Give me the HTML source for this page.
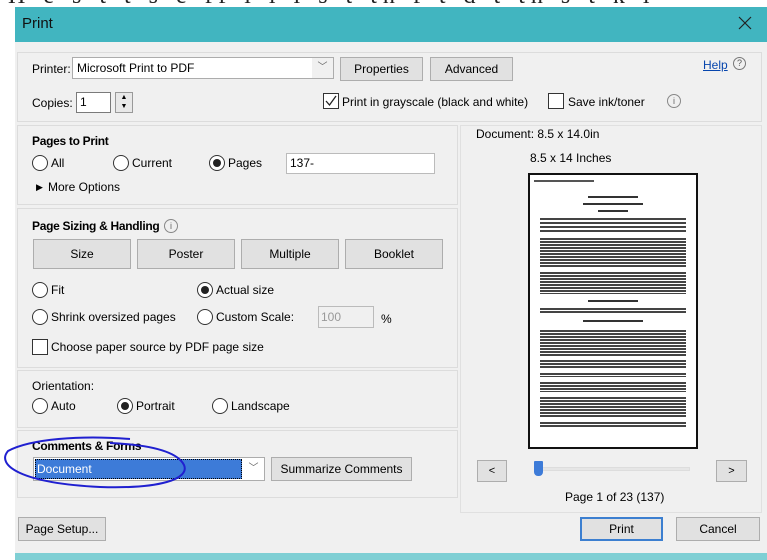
<!DOCTYPE html>
<html><head><meta charset="utf-8"><style>
*{box-sizing:border-box}
body{margin:0;width:767px;height:560px;overflow:hidden;background:#fff;font-family:"Liberation Sans",sans-serif;font-size:12px;color:#000;position:relative}
.a{position:absolute}
.t{position:absolute;white-space:nowrap;font-size:12px;line-height:14px}
.b{position:absolute;background:#e1e1e1;border:1px solid #adadad;text-align:center;font-size:12px;display:flex;align-items:center;justify-content:center}
.r{position:absolute;width:16px;height:16px;border:1px solid #333;border-radius:50%;background:#fff}
.r.on::after{content:"";position:absolute;left:3px;top:3px;width:8px;height:8px;border-radius:50%;background:#222}
.c{position:absolute;width:16px;height:16px;border:1px solid #333;background:#fff}
.sec{position:absolute;border:1px solid #dcdcdc;background:#f0f0f0}
.in{position:absolute;background:#fff;border:1px solid #7a7a7a}
.bd{font-weight:bold;letter-spacing:-0.3px}
</style></head><body>
<div class="a" style="left:0;top:0;width:767px;height:7px;background:#fff;overflow:hidden"><div class="t" style="top:-16px;left:8px;font-family:'Liberation Serif',serif;font-size:24px;line-height:24px;color:#222;letter-spacing:6px">H  e   s  t    t   s   e    ff  l   l i    s t  th   f  t  d  t  th     s t   k    l</div></div>
<div class="a" style="left:15px;top:7px;width:752px;height:553px;background:#f0f0f0"></div>
<div class="a" style="left:15px;top:7px;width:752px;height:35px;background:#41b5c0"></div>
<div class="t" style="left:22px;top:15px;font-size:15px;line-height:18px;color:#111">Print</div>
<svg class="a" style="left:738px;top:16px" width="14" height="14"><path d="M1 1L13 13M13 1L1 13" stroke="#222" stroke-width="1.2"/></svg>
<div class="a" style="left:15px;top:553px;width:752px;height:7px;background:#7fcfd4"></div>

<div class="sec" style="left:17px;top:52px;width:745px;height:70px"></div>
<div class="t" style="left:32px;top:62px">Printer:</div>
<div class="in" style="left:72px;top:57px;width:262px;height:22px;border-color:#acacac"></div>
<div class="t" style="left:77px;top:61px">Microsoft Print to PDF</div>
<div class="a" style="left:312px;top:58px;width:21px;height:20px;background:#f0f0f0;color:#666;text-align:center;font-size:10px;line-height:20px">﹀</div>
<div class="b" style="left:340px;top:57px;width:83px;height:24px">Properties</div>
<div class="b" style="left:430px;top:57px;width:83px;height:24px">Advanced</div>
<div class="t" style="left:703px;top:58px;color:#0645ad;text-decoration:underline">Help</div>
<div class="a" style="left:733px;top:57px;width:13px;height:13px;border:1px solid #777;border-radius:50%;font-size:9px;line-height:11px;text-align:center;color:#555">?</div>
<div class="t" style="left:32px;top:96px">Copies:</div>
<div class="in" style="left:76px;top:92px;width:35px;height:21px"></div>
<div class="t" style="left:80px;top:95px">1</div>
<div class="a" style="left:115px;top:92px;width:18px;height:21px;border:1px solid #999;background:#e8e8e8;font-size:7px;line-height:9px;text-align:center">▲<br>▼</div>
<div class="c" style="left:323px;top:93px"></div>
<svg class="a" style="left:325px;top:95px" width="12" height="12"><path d="M1 6L4.5 10L11 1" fill="none" stroke="#222" stroke-width="1.3"/></svg>
<div class="t" style="left:342px;top:95px">Print in grayscale (black and white)</div>
<div class="c" style="left:548px;top:93px"></div>
<div class="t" style="left:568px;top:95px">Save ink/toner</div>
<div class="a" style="left:667px;top:94px;width:14px;height:14px;border:1px solid #888;border-radius:50%;font-size:9px;line-height:12px;text-align:center;color:#666">i</div>

<div class="sec" style="left:17px;top:125px;width:441px;height:80px"></div>
<div class="t bd" style="left:32px;top:134px">Pages to Print</div>
<div class="r" style="left:32px;top:155px"></div><div class="t" style="left:51px;top:156px">All</div>
<div class="r" style="left:113px;top:155px"></div><div class="t" style="left:132px;top:156px">Current</div>
<div class="r on" style="left:209px;top:155px"></div><div class="t" style="left:228px;top:156px">Pages</div>
<div class="in" style="left:286px;top:153px;width:149px;height:21px;border-color:#bbb"></div>
<div class="t" style="left:290px;top:156px">137-</div>
<div class="t" style="left:36px;top:180px;font-size:9px">▶</div>
<div class="t" style="left:48px;top:180px">More Options</div>

<div class="sec" style="left:17px;top:208px;width:441px;height:160px"></div>
<div class="t bd" style="left:32px;top:219px">Page Sizing &amp; Handling</div>
<div class="a" style="left:164px;top:219px;width:14px;height:14px;border:1px solid #888;border-radius:50%;font-size:9px;line-height:12px;text-align:center;color:#666">i</div>
<div class="b" style="left:33px;top:239px;width:98px;height:30px">Size</div>
<div class="b" style="left:137px;top:239px;width:98px;height:30px">Poster</div>
<div class="b" style="left:241px;top:239px;width:98px;height:30px">Multiple</div>
<div class="b" style="left:345px;top:239px;width:98px;height:30px">Booklet</div>
<div class="r" style="left:32px;top:282px"></div><div class="t" style="left:51px;top:283px">Fit</div>
<div class="r on" style="left:197px;top:282px"></div><div class="t" style="left:216px;top:283px">Actual size</div>
<div class="r" style="left:32px;top:309px"></div><div class="t" style="left:51px;top:310px">Shrink oversized pages</div>
<div class="r" style="left:197px;top:309px"></div><div class="t" style="left:216px;top:310px">Custom Scale:</div>
<div class="a" style="left:318px;top:306px;width:56px;height:22px;border:1px solid #bbb;background:#f0f0f0"></div>
<div class="t" style="left:321px;top:310px;color:#999">100</div>
<div class="t" style="left:381px;top:312px">%</div>
<div class="c" style="left:32px;top:339px"></div><div class="t" style="left:51px;top:340px">Choose paper source by PDF page size</div>

<div class="sec" style="left:17px;top:370px;width:441px;height:58px"></div>
<div class="t" style="left:32px;top:379px">Orientation:</div>
<div class="r" style="left:32px;top:398px"></div><div class="t" style="left:51px;top:399px">Auto</div>
<div class="r on" style="left:117px;top:398px"></div><div class="t" style="left:136px;top:399px">Portrait</div>
<div class="r" style="left:212px;top:398px"></div><div class="t" style="left:231px;top:399px">Landscape</div>

<div class="sec" style="left:17px;top:430px;width:441px;height:68px"></div>
<div class="t bd" style="left:32px;top:439px">Comments &amp; Forms</div>
<div class="in" style="left:33px;top:457px;width:232px;height:24px;border-color:#acacac"></div>
<div class="a" style="left:35px;top:459px;width:207px;height:20px;background:#3d7bd8;border:1px dotted #000"></div>
<div class="t" style="left:37px;top:462px;color:#fff">Document</div>
<div class="a" style="left:243px;top:459px;width:21px;height:20px;color:#666;text-align:center;font-size:10px;line-height:20px">﹀</div>
<div class="b" style="left:271px;top:457px;width:141px;height:24px">Summarize Comments</div>
<svg class="a" style="left:0;top:425px" width="200" height="70"><path d="M130 14 C80 10 30 14 8 26 C-4 40 20 58 100 62 C160 64 190 54 184 40 C178 28 155 20 110 18" fill="none" stroke="#2020d0" stroke-width="2"/></svg>

<div class="sec" style="left:460px;top:125px;width:302px;height:388px;border-color:#e0e0e0"></div>
<div class="t" style="left:476px;top:127px">Document: 8.5 x 14.0in</div>
<div class="t" style="left:530px;top:151px">8.5 x 14 Inches</div>
<div class="a" style="left:528px;top:173px;width:170px;height:276px;border:2px solid #111;background:#fff;padding:5px 10px">
<div style="height:2px;width:60px;background:#555;margin:0 0 14px -6px"></div>
<div style="height:2px;width:50px;background:#333;margin:0 auto 5px"></div>
<div style="height:2px;width:60px;background:#333;margin:0 auto 5px"></div>
<div style="height:2px;width:30px;background:#333;margin:0 auto 6px"></div>
<div style="height:16px;background:repeating-linear-gradient(#444 0 2px,transparent 2px 4px)"></div>
<div style="height:30px;margin-top:4px;background:repeating-linear-gradient(#444 0 2px,transparent 2px 3px)"></div>
<div style="height:22px;margin-top:4px;background:repeating-linear-gradient(#444 0 2px,transparent 2px 3px)"></div>
<div style="height:2px;width:50px;background:#333;margin:6px auto 6px"></div>
<div style="height:6px;background:repeating-linear-gradient(#444 0 2px,transparent 2px 3px)"></div>
<div style="height:2px;width:60px;background:#333;margin:6px auto 8px"></div>
<div style="height:26px;background:repeating-linear-gradient(#444 0 2px,transparent 2px 3px)"></div>
<div style="height:8px;margin-top:4px;background:repeating-linear-gradient(#444 0 2px,transparent 2px 3px)"></div>
<div style="height:4px;margin-top:5px;background:repeating-linear-gradient(#444 0 2px,transparent 2px 3px)"></div>
<div style="height:10px;margin-top:5px;background:repeating-linear-gradient(#444 0 2px,transparent 2px 3px)"></div>
<div style="height:20px;margin-top:5px;background:repeating-linear-gradient(#444 0 2px,transparent 2px 3px)"></div>
<div style="height:5px;margin-top:5px;background:repeating-linear-gradient(#444 0 2px,transparent 2px 3px)"></div>
</div>
<div class="b" style="left:477px;top:460px;width:30px;height:22px;font-size:11px">&lt;</div>
<div class="b" style="left:716px;top:460px;width:31px;height:22px;font-size:11px">&gt;</div>
<div class="a" style="left:534px;top:467px;width:156px;height:4px;background:#e6e6e6;border:1px solid #ddd"></div>
<div class="a" style="left:534px;top:461px;width:9px;height:15px;background:#3d7bd8;border-radius:1px 1px 4px 4px"></div>
<div class="t" style="left:565px;top:490px">Page 1 of 23 (137)</div>

<div class="b" style="left:18px;top:517px;width:88px;height:24px">Page Setup...</div>
<div class="b" style="left:580px;top:517px;width:83px;height:24px;border:2px solid #3c7fd0">Print</div>
<div class="b" style="left:676px;top:517px;width:84px;height:24px">Cancel</div>
</body></html>
